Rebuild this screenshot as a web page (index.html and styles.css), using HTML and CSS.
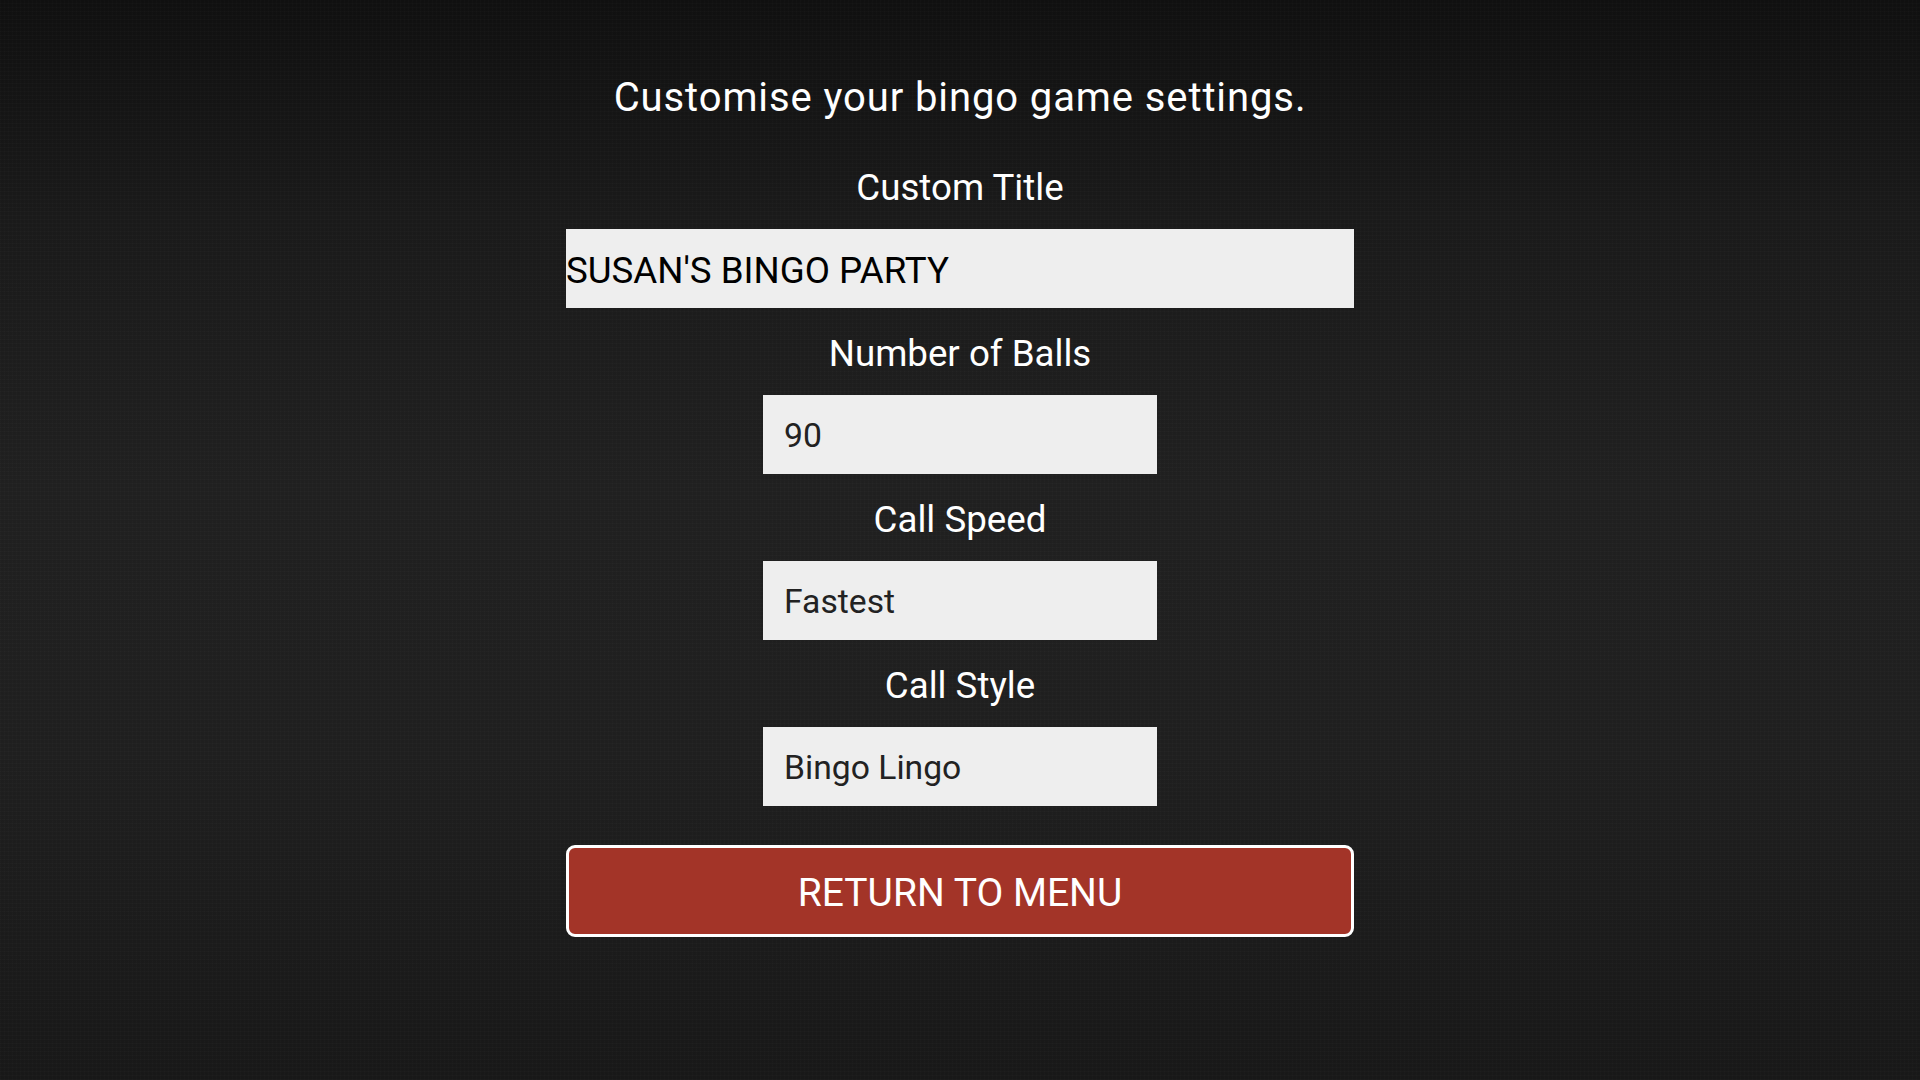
FILE: index.html
```html
<!DOCTYPE html>
<html>
<head>
    <meta name="viewport" content="width=device-width, initial-scale=1">
    <title>Bingo Settings</title>
    <link rel="stylesheet" href="styles.css">
</head>
<body>
    <div class="settings">
        <h1>Customise your bingo game settings.</h1>

        <label for="customTitle">Custom Title</label>
        <input type="text" id="customTitle" class="wide" value="SUSAN'S BINGO PARTY">

        <label for="numBalls">Number of Balls</label>
        <input type="text" id="numBalls" value="90">

        <label for="callSpeed">Call Speed</label>
        <select id="callSpeed">
            <option>Slow</option>
            <option>Normal</option>
            <option>Fast</option>
            <option selected>Fastest</option>
        </select>

        <label for="callStyle">Call Style</label>
        <select id="callStyle">
            <option>Numbers Only</option>
            <option selected>Bingo Lingo</option>
        </select>

        <button id="menuBtn">Return to Menu</button>
    </div>
</body>
</html>
```

FILE: styles.css
```css
html {
    background-color: #1c1c1c;
}
body {
    font-family: Roboto, "Liberation Sans", sans-serif;
    margin: 0;
    min-height: 100vh;
    color: #fff;
    background:
        repeating-linear-gradient(90deg, rgba(255,255,255,0.012) 0 1px, transparent 1px 4px),
        repeating-linear-gradient(0deg, rgba(255,255,255,0.012) 0 1px, transparent 1px 4px),
        linear-gradient(#101010 0%, #1a1a1a 20%, #202020 45%, #1f1f1f 70%, #181818 100%);
}
.settings {
    width: 788px;
    margin: 0 auto;
    padding-top: 74px;
    display: flex;
    flex-direction: column;
    align-items: center;
}
h1 {
    font-size: 40px;
    font-weight: 400;
    line-height: 48px;
    letter-spacing: 0.9px;
    margin: 0 0 44px;
}
label {
    font-size: 36.7px;
    line-height: 44px;
    margin-bottom: 19px;
}
input,
select {
    box-sizing: border-box;
    width: 394px;
    height: 79px;
    margin: 0 0 24px;
    padding: 1px 21px 0;
    border: none;
    border-radius: 0;
    outline: none;
    background-color: #eeeeee;
    color: #222;
    font-family: inherit;
    font-size: 33.7px;
    appearance: none;
    -webkit-appearance: none;
}
input.wide {
    width: 788px;
    padding: 3px 0 0;
    color: #000;
    font-size: 36.7px;
}
select:last-of-type {
    margin-bottom: 39px;
}
button {
    box-sizing: border-box;
    width: 788px;
    height: 92px;
    padding-top: 5px;
    background-color: #a33428;
    color: #fff;
    border: 3px solid #fff;
    border-radius: 9px;
    font-family: inherit;
    font-size: 39px;
    text-transform: uppercase;
    cursor: pointer;
}
button:hover {
    background-color: #b23b2e;
}
```
